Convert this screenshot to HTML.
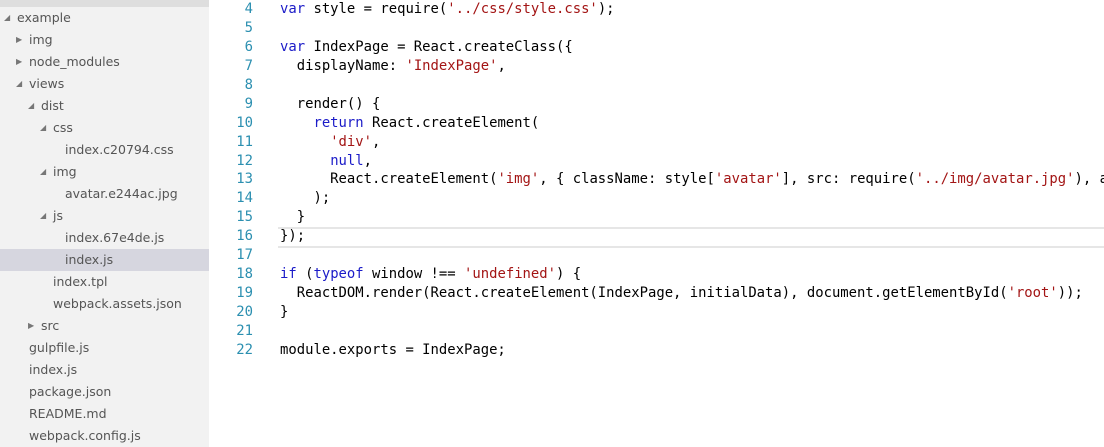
<!DOCTYPE html><html><head><style>
body{margin:0;width:1104px;height:447px;overflow:hidden;background:#fff;position:relative;font-family:"DejaVu Sans Mono","Liberation Mono",monospace}
#side{position:absolute;left:0;top:0;width:209px;height:447px;background:#f2f2f2;font-family:"DejaVu Sans","Liberation Sans",sans-serif;font-size:12.5px;color:#555;overflow:hidden}
#side .top{height:7px;background:#dedede}
.r{height:22px;line-height:22px;position:relative;white-space:nowrap}
.r.sel{background:#d6d6df}
.a{position:absolute;top:0;font-size:8px;color:#777}
.code{position:absolute;left:209px;top:0;right:0;bottom:0;font-size:13.9px;overflow:hidden}
.l{height:18.95px;line-height:18.95px;white-space:pre;position:relative}
.n{display:inline-block;width:44px;text-align:right;color:#2b8fb0;margin-right:27px}
.k{color:#1b1bc8}.s{color:#a31515}
.cur{position:absolute;left:69px;right:0;top:0;height:17px;border-top:2px solid #e6e6e6;border-bottom:2px solid #e6e6e6}
</style></head><body>
<div id="side"><div class="top"></div>
<div class="r"><span class="a" style="left:4px">◢</span><span style="margin-left:17px">example</span></div>
<div class="r"><span class="a" style="left:16px">▶</span><span style="margin-left:29px">img</span></div>
<div class="r"><span class="a" style="left:16px">▶</span><span style="margin-left:29px">node_modules</span></div>
<div class="r"><span class="a" style="left:16px">◢</span><span style="margin-left:29px">views</span></div>
<div class="r"><span class="a" style="left:28px">◢</span><span style="margin-left:41px">dist</span></div>
<div class="r"><span class="a" style="left:40px">◢</span><span style="margin-left:53px">css</span></div>
<div class="r"><span style="margin-left:65px">index.c20794.css</span></div>
<div class="r"><span class="a" style="left:40px">◢</span><span style="margin-left:53px">img</span></div>
<div class="r"><span style="margin-left:65px">avatar.e244ac.jpg</span></div>
<div class="r"><span class="a" style="left:40px">◢</span><span style="margin-left:53px">js</span></div>
<div class="r"><span style="margin-left:65px">index.67e4de.js</span></div>
<div class="r sel"><span style="margin-left:65px">index.js</span></div>
<div class="r"><span style="margin-left:53px">index.tpl</span></div>
<div class="r"><span style="margin-left:53px">webpack.assets.json</span></div>
<div class="r"><span class="a" style="left:28px">▶</span><span style="margin-left:41px">src</span></div>
<div class="r"><span style="margin-left:29px">gulpfile.js</span></div>
<div class="r"><span style="margin-left:29px">index.js</span></div>
<div class="r"><span style="margin-left:29px">package.json</span></div>
<div class="r"><span style="margin-left:29px">README.md</span></div>
<div class="r"><span style="margin-left:29px">webpack.config.js</span></div>
</div>
<div class="code">
<div class="l"><span class="n">4</span><span class="k">var</span> style = require(<span class="s">'../css/style.css'</span>);</div>
<div class="l"><span class="n">5</span></div>
<div class="l"><span class="n">6</span><span class="k">var</span> IndexPage = React.createClass({</div>
<div class="l"><span class="n">7</span>  displayName: <span class="s">'IndexPage'</span>,</div>
<div class="l"><span class="n">8</span></div>
<div class="l"><span class="n">9</span>  render() {</div>
<div class="l"><span class="n">10</span>    <span class="k">return</span> React.createElement(</div>
<div class="l"><span class="n">11</span>      <span class="s">'div'</span>,</div>
<div class="l"><span class="n">12</span>      <span class="k">null</span>,</div>
<div class="l"><span class="n">13</span>      React.createElement(<span class="s">'img'</span>, { className: style[<span class="s">'avatar'</span>], src: require(<span class="s">'../img/avatar.jpg'</span>), alt: <span class="s">''</span> })</div>
<div class="l"><span class="n">14</span>    );</div>
<div class="l"><span class="n">15</span>  }</div>
<div class="l"><div class="cur"></div><span class="n">16</span>});</div>
<div class="l"><span class="n">17</span></div>
<div class="l"><span class="n">18</span><span class="k">if</span> (<span class="k">typeof</span> window !== <span class="s">'undefined'</span>) {</div>
<div class="l"><span class="n">19</span>  ReactDOM.render(React.createElement(IndexPage, initialData), document.getElementById(<span class="s">'root'</span>));</div>
<div class="l"><span class="n">20</span>}</div>
<div class="l"><span class="n">21</span></div>
<div class="l"><span class="n">22</span>module.exports = IndexPage;</div>
</div>
</body></html>
